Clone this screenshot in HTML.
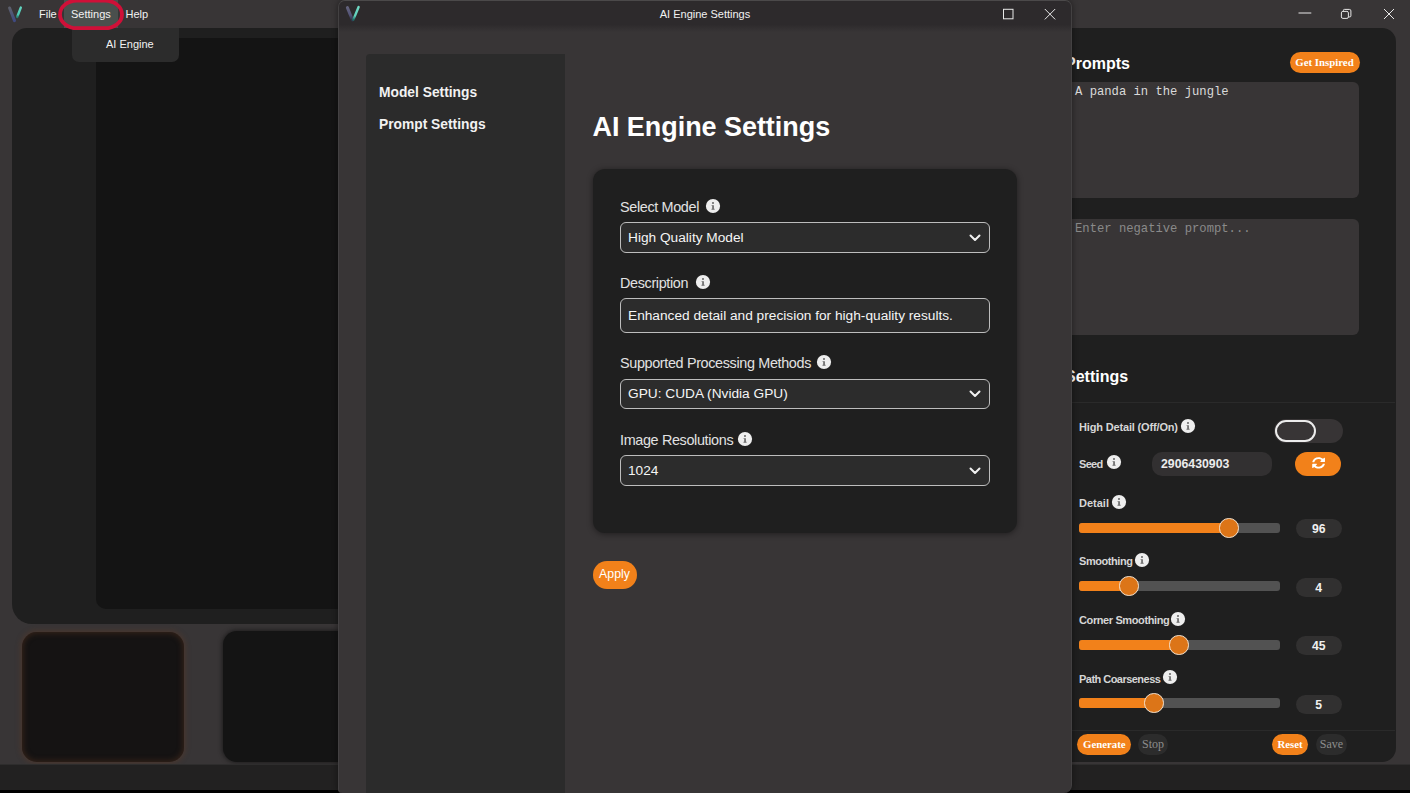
<!DOCTYPE html>
<html>
<head>
<meta charset="utf-8">
<title>AI Engine Settings</title>
<style>
*{box-sizing:border-box;margin:0;padding:0}
html,body{width:1410px;height:793px;overflow:hidden}
body{background:#383536;font-family:"Liberation Sans",sans-serif;color:#fff;position:relative}
.abs{position:absolute}
/* ---------- main window ---------- */
#menubar{left:0;top:0;width:1410px;height:28px;background:#383536}
.menu{position:absolute;top:0;height:28px;line-height:28px;font-size:11px;color:#f2f2f2;white-space:nowrap}
#leftpanel{left:12px;top:28px;width:1060px;height:595.5px;background:#1f1f1f;border-radius:15px 15px 20px 20px}
#canvas{left:96px;top:38px;width:960px;height:570.5px;background:#141414;border-radius:10px}
#thumb1{left:22px;top:632px;width:162px;height:129.5px;background:#151313;border-radius:15px;box-shadow:inset 0 0 5px 2px rgba(75,45,30,.5),0 0 5px 2px rgba(95,58,38,.4)}
#thumb2{left:222.5px;top:630.5px;width:161px;height:131.5px;background:#141414;border-radius:14px;box-shadow:0 0 4px 1px rgba(18,18,18,.7)}
#bottombar{left:0;top:763.7px;width:1410px;height:29.3px;background:#222121;border-bottom:3px solid #000;border-top:1px solid #2e2d2d}
#dropdown{left:72px;top:28px;width:107px;height:34px;background:#2c2c2c;border-radius:0 0 7px 7px;font-size:11px;line-height:33px;color:#f2f2f2}
#dropdown span{position:absolute;left:34px;top:0}
#sethl{left:64px;top:0;width:54px;height:28px;background:#4a4f4d}
/* ---------- right panel ---------- */
#rightpanel{left:1040px;top:28px;width:355.5px;height:734px;background:#1f1f1f;border-radius:14px}
.h2{font-weight:bold;font-size:16px;color:#fff;white-space:nowrap}
.serifbtn{font-family:"Liberation Serif",serif;font-size:10.8px;font-weight:bold;color:#fff;text-align:center;border-radius:11px;white-space:nowrap}
.orange{background:#f2811a}
.ta{background:#383536;border-radius:6px;font-family:"Liberation Mono",monospace;font-size:12.2px;white-space:nowrap}
.lbl{font-weight:bold;font-size:11px;color:#d6d6d6;white-space:nowrap}
.info{width:14px;height:14px;overflow:visible}
.track{height:10px;border-radius:3px;background:#525252;width:201px;left:1079px;margin-top:-1px}
.fill{height:10px;border-radius:3px;background:#f2811a;left:1079px;margin-top:-1px}
.knob{width:19.4px;height:19.4px;margin:.3px;border-radius:50%;background:#dc7518;border:1.6px solid #f5e3cf}
.val{left:1295.5px;width:46.5px;height:19px;border-radius:9.5px;background:#313030;font-size:12.2px;font-weight:bold;line-height:20px;margin-top:-.5px;text-align:center;color:#f0f0f0}
.hr{height:1px;background:#2a2a2a}
/* ---------- dialog ---------- */
#dialog{left:338px;top:0;width:734px;height:793px;background:#383536;box-shadow:0 0 6px rgba(0,0,0,.45);border-left:1px solid #434142;border-right:1px solid #434142;border-top:1.5px solid #4b494a;border-radius:7px 7px 8px 4px;overflow:hidden}
#dtitle{left:0;top:0;width:732px;height:32px;background:linear-gradient(#2d2a2c 0,#2d2a2c 23.5px,#383536 31px)}
#dtitletext{left:0;top:0;width:732px;text-align:center;font-size:11px;line-height:27px;color:#f2f2f2}
#sidebar{left:365.5px;top:54px;width:199px;height:739px;background:#2b2b2b;border-radius:4px 0 0 0}
.nav{font-weight:bold;font-size:13.8px;color:#f2f2f2;white-space:nowrap}
#h1{left:592.5px;top:108.5px;font-weight:bold;font-size:27px;line-height:36px;color:#fff;white-space:nowrap;letter-spacing:-.05px}
#card{left:593px;top:169px;width:424px;height:363.5px;background:#1f1f1f;border-radius:12px;box-shadow:0 1px 6px rgba(0,0,0,.45)}
.flabel{font-size:14.4px;letter-spacing:-.35px;color:#e2e2e2;white-space:nowrap;left:620px}
.field{left:620px;width:370px;border:1px solid #bdbdbd;border-radius:6px;background:#2c2c2c;font-size:13.7px;color:#f5f5f5;padding-left:7px;white-space:nowrap}
.chev{position:absolute;right:8px;top:50%;margin-top:-4px;width:12px;height:8px}
#apply{left:592.5px;top:561px;width:44px;height:27.5px;border-radius:14px;font-size:12.3px;line-height:27px;text-align:center;color:#fff}
</style>
</head>
<body>
<!-- main window -->
<div id="menubar" class="abs"></div>
<div id="leftpanel" class="abs"></div>
<div id="canvas" class="abs"></div>
<div id="thumb1" class="abs"></div>
<div id="thumb2" class="abs"></div>
<div id="bottombar" class="abs"></div>
<div id="rightpanel" class="abs"></div>

<div id="sethl" class="abs"></div>
<svg class="abs" style="left:7px;top:5px" width="18" height="20" viewBox="0 0 18 20">
  <defs>
    <linearGradient id="lgA" x1="0" y1="0" x2="0" y2="1"><stop offset="0" stop-color="#5c5f6c"/><stop offset="1" stop-color="#3f4a82"/></linearGradient>
    <linearGradient id="lgB" x1="0" y1="0" x2="0" y2="1"><stop offset="0" stop-color="#62d6c1"/><stop offset=".75" stop-color="#4cc9b4"/><stop offset="1" stop-color="#2a7d70"/></linearGradient>
  </defs>
  <path d="M2.6 3 L7.5 15.6" stroke="url(#lgA)" stroke-width="3" stroke-linecap="round" fill="none"/>
  <path d="M10.2 12 L13.8 2.6" stroke="url(#lgB)" stroke-width="2.4" stroke-linecap="round" fill="none"/>
</svg>
<div class="menu" style="left:39px">File</div>
<div class="menu" style="left:71px">Settings</div>
<div class="menu" style="left:125.5px">Help</div>
<div id="dropdown" class="abs"><span>AI Engine</span></div>
<svg class="abs" style="left:56px;top:-6px" width="70" height="40" viewBox="0 0 70 40">
  <rect x="4" y="6.6" width="62" height="27.6" rx="17" ry="13.8" fill="none" stroke="#cf1038" stroke-width="3.8"/>
</svg>

<!-- main window controls -->
<svg class="abs" style="left:1296px;top:4px" width="104" height="20" viewBox="0 0 104 20" fill="none" stroke="#e8e8e8" stroke-width="1">
  <path d="M2.5 9 H15.3"/>
  <g transform="translate(-1.1,0.9)"><rect x="46.5" y="6.5" width="7" height="7" rx="1.5"/>
  <path d="M48.5 6.5 V5.5 a1 1 0 0 1 1-1 H54.5 a1.5 1.5 0 0 1 1.5 1.5 V11 a1 1 0 0 1-1 1 H53.5"/></g>
  <path d="M88 5 L98 15 M98 5 L88 15"/>
</svg>

<!-- right panel content -->
<div class="abs h2" style="left:1065px;top:55px">Prompts</div>
<div class="abs serifbtn orange" style="left:1289.5px;top:52px;width:70px;height:21.3px;line-height:21.5px">Get Inspired</div>
<div class="abs ta" style="left:1060px;top:82px;width:299px;height:116px;color:#dadada"><span class="abs" style="left:15px;top:3px">A panda in the jungle</span></div>
<div class="abs ta" style="left:1060px;top:219px;width:299px;height:116px;color:#8a8a8a"><span class="abs" style="left:15px;top:3px">Enter negative prompt...</span></div>
<div class="abs h2" style="left:1065px;top:367.5px">Settings</div>
<div class="abs hr" style="left:1060px;top:401.5px;width:335px"></div>

<div class="abs lbl" style="left:1079px;top:420.5px;letter-spacing:-.16px">High Detail (Off/On)</div>
<svg class="abs info" style="left:1181px;top:419px" viewBox="0 0 14 14"><circle cx="7" cy="7" r="7.1" fill="#eeeeee"/><circle cx="7" cy="4" r="1.05" fill="#6a6a6a"/><path d="M5.6 6.2 H7.9 V9.8 H8.6 V10.7 H5.5 V9.8 H6.2 V7.1 H5.6 Z" fill="#6a6a6a"/></svg>
<div class="abs" style="left:1274px;top:419px;width:69px;height:23.5px;border-radius:12px;background:#373435"></div>
<div class="abs" style="left:1275px;top:419.5px;width:41px;height:22px;border-radius:11px;border:2px solid #ececec;background:#383536"></div>

<div class="abs lbl" style="left:1079px;top:457.5px;letter-spacing:-.7px">Seed</div>
<svg class="abs info" style="left:1107.3px;top:455.4px" viewBox="0 0 14 14"><circle cx="7" cy="7" r="7.1" fill="#eeeeee"/><circle cx="7" cy="4" r="1.05" fill="#6a6a6a"/><path d="M5.6 6.2 H7.9 V9.8 H8.6 V10.7 H5.5 V9.8 H6.2 V7.1 H5.6 Z" fill="#6a6a6a"/></svg>
<div class="abs" style="left:1152px;top:452px;width:120px;height:24px;border-radius:10px;background:#323031;font-size:12.3px;font-weight:bold;line-height:24.5px;padding-left:9px;color:#ececec">2906430903</div>
<div class="abs orange" style="left:1295.2px;top:452px;width:45.8px;height:24px;border-radius:12px"></div>
<svg class="abs" style="left:1312px;top:457px" width="13.2" height="11.8" viewBox="0 0 512 512" preserveAspectRatio="none"><path fill="#fff" d="M370.72 133.28C339.458 104.008 298.888 87.962 255.848 88c-77.458.068-144.328 53.178-162.791 126.85-1.344 5.363-6.122 9.15-11.651 9.15H24.103c-7.498 0-13.194-6.807-11.807-14.176C33.933 94.924 134.813 8 256 8c66.448 0 126.791 26.136 171.315 68.685L463.03 40.97C478.149 25.851 504 36.559 504 57.941V192c0 13.255-10.745 24-24 24H345.941c-21.382 0-32.09-25.851-16.971-40.971l41.75-41.749zM32 296h134.059c21.382 0 32.09 25.851 16.971 40.971l-41.75 41.75c31.262 29.273 71.835 45.319 114.876 45.28 77.418-.07 144.315-53.144 162.787-126.849 1.344-5.363 6.122-9.15 11.651-9.15h57.304c7.498 0 13.194 6.807 11.807 14.176C478.067 417.076 377.187 504 256 504c-66.448 0-126.791-26.136-171.315-68.685L48.97 471.03C33.851 486.149 8 475.441 8 454.059V320c0-13.255 10.745-24 24-24z"/></svg>

<div class="abs lbl" style="left:1079px;top:497px;letter-spacing:0">Detail</div>
<svg class="abs info" style="left:1112px;top:495px" viewBox="0 0 14 14"><circle cx="7" cy="7" r="7.1" fill="#eeeeee"/><circle cx="7" cy="4" r="1.05" fill="#6a6a6a"/><path d="M5.6 6.2 H7.9 V9.8 H8.6 V10.7 H5.5 V9.8 H6.2 V7.1 H5.6 Z" fill="#6a6a6a"/></svg>
<div class="abs track" style="top:524px"></div><div class="abs fill" style="top:524px;width:150px"></div>
<div class="abs knob" style="left:1219px;top:518px"></div>
<div class="abs val" style="top:519px">96</div>

<div class="abs lbl" style="left:1079px;top:555px;letter-spacing:-.44px">Smoothing</div>
<svg class="abs info" style="left:1135px;top:553px" viewBox="0 0 14 14"><circle cx="7" cy="7" r="7.1" fill="#eeeeee"/><circle cx="7" cy="4" r="1.05" fill="#6a6a6a"/><path d="M5.6 6.2 H7.9 V9.8 H8.6 V10.7 H5.5 V9.8 H6.2 V7.1 H5.6 Z" fill="#6a6a6a"/></svg>
<div class="abs track" style="top:582px"></div><div class="abs fill" style="top:582px;width:50px"></div>
<div class="abs knob" style="left:1119px;top:576px"></div>
<div class="abs val" style="top:578px">4</div>

<div class="abs lbl" style="left:1079px;top:614px;letter-spacing:-.39px">Corner Smoothing</div>
<svg class="abs info" style="left:1171px;top:612px" viewBox="0 0 14 14"><circle cx="7" cy="7" r="7.1" fill="#eeeeee"/><circle cx="7" cy="4" r="1.05" fill="#6a6a6a"/><path d="M5.6 6.2 H7.9 V9.8 H8.6 V10.7 H5.5 V9.8 H6.2 V7.1 H5.6 Z" fill="#6a6a6a"/></svg>
<div class="abs track" style="top:641px"></div><div class="abs fill" style="top:641px;width:100px"></div>
<div class="abs knob" style="left:1169px;top:635px"></div>
<div class="abs val" style="top:636px">45</div>

<div class="abs lbl" style="left:1079px;top:672.5px;letter-spacing:-.53px">Path Coarseness</div>
<svg class="abs info" style="left:1163px;top:670px" viewBox="0 0 14 14"><circle cx="7" cy="7" r="7.1" fill="#eeeeee"/><circle cx="7" cy="4" r="1.05" fill="#6a6a6a"/><path d="M5.6 6.2 H7.9 V9.8 H8.6 V10.7 H5.5 V9.8 H6.2 V7.1 H5.6 Z" fill="#6a6a6a"/></svg>
<div class="abs track" style="top:699px"></div><div class="abs fill" style="top:699px;width:75px"></div>
<div class="abs knob" style="left:1144px;top:693px"></div>
<div class="abs val" style="top:695px">5</div>

<div class="abs hr" style="left:1060px;top:730px;width:335px"></div>
<div class="abs serifbtn orange" style="left:1077.3px;top:734.3px;width:54px;height:21px;line-height:21px">Generate</div>
<div class="abs serifbtn" style="left:1138px;top:734px;width:30px;height:21px;line-height:21px;background:#2c2c2c;color:#8c8c8c;font-weight:normal;font-size:12px">Stop</div>
<div class="abs serifbtn orange" style="left:1272px;top:734px;width:36px;height:21px;line-height:21px">Reset</div>
<div class="abs serifbtn" style="left:1316px;top:734px;width:31px;height:21px;line-height:21px;background:#2c2c2c;color:#8c8c8c;font-weight:normal;font-size:12px">Save</div>

<!-- dialog -->
<div id="dialog" class="abs">
  <div id="dtitle" class="abs"></div>
  <div id="dtitletext" class="abs">AI Engine Settings</div>
</div>
<svg class="abs" style="left:345px;top:4px" width="18" height="20" viewBox="0 0 18 20">
  <defs>
    <linearGradient id="lgC" x1="0" y1="0" x2="0" y2="1"><stop offset="0" stop-color="#62627c"/><stop offset=".6" stop-color="#545478"/><stop offset="1" stop-color="#2f3248"/></linearGradient>
    <linearGradient id="lgD" x1="0" y1="0" x2="0" y2="1"><stop offset="0" stop-color="#6fd8c3"/><stop offset=".7" stop-color="#62d2bd"/><stop offset="1" stop-color="#1f6f66"/></linearGradient>
  </defs>
  <path d="M2.4 3.6 L7.4 16" stroke="url(#lgC)" stroke-width="3" stroke-linecap="round" fill="none"/>
  <path d="M8.4 15.6 L13.6 3" stroke="url(#lgD)" stroke-width="2.4" stroke-linecap="round" fill="none"/>
</svg>
<svg class="abs" style="left:997px;top:4px" width="64" height="20" viewBox="0 0 64 20" fill="none" stroke="#e8e8e8" stroke-width="1">
  <rect x="6.5" y="5.3" width="9.5" height="9.5"/>
  <path d="M47.8 5 L58.2 15.4 M58.2 5 L47.8 15.4"/>
</svg>
<div id="sidebar" class="abs"></div>
<div class="abs nav" style="left:379px;top:85px">Model Settings</div>
<div class="abs nav" style="left:379px;top:116.5px">Prompt Settings</div>
<div id="h1" class="abs">AI Engine Settings</div>
<div id="card" class="abs"></div>

<div class="abs flabel" style="top:199px">Select Model</div>
<svg class="abs info" style="left:706px;top:199px" viewBox="0 0 14 14"><circle cx="7" cy="7" r="7.1" fill="#eeeeee"/><circle cx="7" cy="4" r="1.05" fill="#6a6a6a"/><path d="M5.6 6.2 H7.9 V9.8 H8.6 V10.7 H5.5 V9.8 H6.2 V7.1 H5.6 Z" fill="#6a6a6a"/></svg>
<div class="abs field" style="top:222px;height:31px;line-height:29px">High Quality Model<svg class="chev" viewBox="0 0 12 8"><path d="M1.5 1.5 L6 6 L10.5 1.5" fill="none" stroke="#f0f0f0" stroke-width="2" stroke-linecap="round" stroke-linejoin="round"/></svg></div>

<div class="abs flabel" style="top:275px">Description</div>
<svg class="abs info" style="left:696px;top:275px" viewBox="0 0 14 14"><circle cx="7" cy="7" r="7.1" fill="#eeeeee"/><circle cx="7" cy="4" r="1.05" fill="#6a6a6a"/><path d="M5.6 6.2 H7.9 V9.8 H8.6 V10.7 H5.5 V9.8 H6.2 V7.1 H5.6 Z" fill="#6a6a6a"/></svg>
<div class="abs field" style="top:298px;height:35px;line-height:33px">Enhanced detail and precision for high-quality results.</div>

<div class="abs flabel" style="top:355px">Supported Processing Methods</div>
<svg class="abs info" style="left:817px;top:355px" viewBox="0 0 14 14"><circle cx="7" cy="7" r="7.1" fill="#eeeeee"/><circle cx="7" cy="4" r="1.05" fill="#6a6a6a"/><path d="M5.6 6.2 H7.9 V9.8 H8.6 V10.7 H5.5 V9.8 H6.2 V7.1 H5.6 Z" fill="#6a6a6a"/></svg>
<div class="abs field" style="top:379px;height:30px;line-height:28px">GPU: CUDA (Nvidia GPU)<svg class="chev" viewBox="0 0 12 8"><path d="M1.5 1.5 L6 6 L10.5 1.5" fill="none" stroke="#f0f0f0" stroke-width="2" stroke-linecap="round" stroke-linejoin="round"/></svg></div>

<div class="abs flabel" style="top:432px">Image Resolutions</div>
<svg class="abs info" style="left:738px;top:432px" viewBox="0 0 14 14"><circle cx="7" cy="7" r="7.1" fill="#eeeeee"/><circle cx="7" cy="4" r="1.05" fill="#6a6a6a"/><path d="M5.6 6.2 H7.9 V9.8 H8.6 V10.7 H5.5 V9.8 H6.2 V7.1 H5.6 Z" fill="#6a6a6a"/></svg>
<div class="abs field" style="top:455px;height:31px;line-height:29px">1024<svg class="chev" viewBox="0 0 12 8"><path d="M1.5 1.5 L6 6 L10.5 1.5" fill="none" stroke="#f0f0f0" stroke-width="2" stroke-linecap="round" stroke-linejoin="round"/></svg></div>

<div id="apply" class="abs orange">Apply</div>

</body>
</html>
